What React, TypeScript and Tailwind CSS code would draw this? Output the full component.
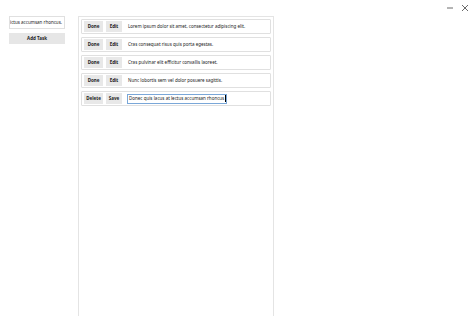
import { useState } from "react";

const TASKS = [
  "Lorem ipsum dolor sit amet, consectetur adipiscing elit.",
  "Cras consequat risus quis porta egestas.",
  "Cras pulvinar elit efficitur convallis laoreet.",
  "Nunc lobortis sem vel dolor posuere sagittis.",
];

export default function App() {
  const [draft] = useState("ictus accumsan rhoncus.");
  const [editing] = useState("Donec quis lacus at lectus accumsan rhoncus");

  return (
    <div
      className="relative h-[316px] w-[474px] overflow-hidden bg-white text-[4.5px] text-[#222]"
      style={{ fontFamily: '"Noto Sans", "Open Sans", sans-serif' }}
    >
      {/* window controls */}
      <div className="absolute right-[4px] top-[3px] flex items-center gap-[5px]">
        <svg width="10" height="10" viewBox="0 0 10 10">
          <path d="M2 5h6" stroke="#444" strokeWidth="0.8" />
        </svg>
        <svg width="10" height="10" viewBox="0 0 10 10">
          <path d="M2 2l6 6M8 2l-6 6" stroke="#444" strokeWidth="0.8" />
        </svg>
      </div>

      <div className="flex gap-[13px] pl-[9px] pt-[16px]">
        <div className="flex w-[56px] flex-col gap-[4px]">
          <div className="flex h-[13px] items-center justify-end overflow-hidden whitespace-nowrap border border-[#e0e0e0] px-[2px]">
            {draft}
          </div>
          <div className="flex h-[11px] items-center justify-center bg-[#e6e6e6] font-bold">Add Task</div>
        </div>

        <div className="flex h-[310px] w-[196px] flex-col gap-[3px] border border-[#e4e4e4] px-[2px] pt-[2px]">
          {TASKS.map((t) => (
            <div key={t} className="flex h-[15px] items-center gap-[3px] rounded-[1px] border border-[#e0e0e0] px-[2px]">
              <div className="flex h-[11px] w-[19px] items-center justify-center bg-[#e8e8e8] font-bold">Done</div>
              <div className="flex h-[11px] w-[16px] items-center justify-center bg-[#e8e8e8] font-bold">Edit</div>
              <span className="ml-[3px] whitespace-nowrap">{t}</span>
            </div>
          ))}
          <div className="flex h-[15px] items-center gap-[3px] rounded-[1px] border border-[#e0e0e0] px-[2px]">
            <div className="flex h-[11px] w-[19px] items-center justify-center bg-[#e8e8e8] font-bold">Delete</div>
            <div className="flex h-[11px] w-[16px] items-center justify-center bg-[#e8e8e8] font-bold">Save</div>
            <div className="ml-[2px] flex h-[10px] w-[100px] items-center whitespace-nowrap border border-[#7aa7d8] px-[1px]">
              {editing}
              <span className="ml-[0.5px] inline-block h-[7px] w-[0.6px] bg-black" />
            </div>
          </div>
        </div>
      </div>
    </div>
  );
}
